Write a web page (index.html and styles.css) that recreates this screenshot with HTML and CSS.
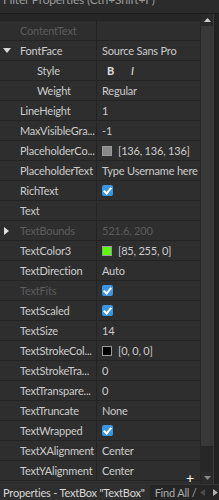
FILE: index.html
```html
<!DOCTYPE html>
<html lang="en">
<head>
    <meta charset="UTF-8">
    <title>Properties - TextBox</title>
    <link rel="stylesheet" href="styles.css">
</head>
<body>
    <div class="panel">
        <div class="filter"><span class="filter-text">Filter Properties (Ctrl+Shift+F)</span></div>
        <div class="body">
            <div class="rows">
                <div class="row"><div class="name disabled">ContentText</div><div class="value"></div></div>
                <div class="row"><div class="name"><span class="arrow down"></span>FontFace</div><div class="value">Source Sans Pro</div></div>
                <div class="row"><div class="name sub">Style</div><div class="value"><span class="bold">B</span><span class="italic">I</span></div></div>
                <div class="row"><div class="name sub">Weight</div><div class="value">Regular</div></div>
                <div class="row"><div class="name">LineHeight</div><div class="value">1</div></div>
                <div class="row"><div class="name">MaxVisibleGra...</div><div class="value">-1</div></div>
                <div class="row"><div class="name">PlaceholderCo...</div><div class="value"><span class="swatch" style="background:#888888"></span>[136, 136, 136]</div></div>
                <div class="row"><div class="name">PlaceholderText</div><div class="value">Type Username here</div></div>
                <div class="row"><div class="name">RichText</div><div class="value"><span class="check"></span></div></div>
                <div class="row"><div class="name">Text</div><div class="value"></div></div>
                <div class="row"><div class="name disabled"><span class="arrow right"></span>TextBounds</div><div class="value disabled">521.6, 200</div></div>
                <div class="row"><div class="name">TextColor3</div><div class="value"><span class="swatch" style="background:#55ff00"></span>[85, 255, 0]</div></div>
                <div class="row"><div class="name">TextDirection</div><div class="value">Auto</div></div>
                <div class="row"><div class="name disabled">TextFits</div><div class="value"><span class="check"></span></div></div>
                <div class="row"><div class="name">TextScaled</div><div class="value"><span class="check"></span></div></div>
                <div class="row"><div class="name">TextSize</div><div class="value">14</div></div>
                <div class="row"><div class="name">TextStrokeCol...</div><div class="value"><span class="swatch" style="background:#000000"></span>[0, 0, 0]</div></div>
                <div class="row"><div class="name">TextStrokeTra...</div><div class="value">0</div></div>
                <div class="row"><div class="name">TextTranspare...</div><div class="value">0</div></div>
                <div class="row"><div class="name">TextTruncate</div><div class="value">None</div></div>
                <div class="row"><div class="name">TextWrapped</div><div class="value"><span class="check"></span></div></div>
                <div class="row"><div class="name">TextXAlignment</div><div class="value">Center</div></div>
                <div class="row"><div class="name">TextYAlignment</div><div class="value">Center</div></div>
                <div class="rest"></div>
            </div>
            <div class="scrollbar">
                <div class="sb-btn"><svg width="7" height="4" viewBox="0 0 7 4"><path d="M0 4 L3.5 0 L7 4 Z" fill="#d0d0d0"/></svg></div>
                <div class="thumb"></div>
                <div class="track"></div>
                <div class="sb-btn"><svg width="7" height="4" viewBox="0 0 7 4"><path d="M0 0 L3.5 4 L7 0 Z" fill="#8a8a8a"/></svg></div>
            </div>
            <div class="edge"></div>
            <span class="plus">+</span>
        </div>
        <div class="tabs">
            <div class="tab active">Properties - TextBox "TextBox"</div>
            <div class="tab">Find All /</div>
            <div class="tab-arrows">
                <svg width="5" height="7" viewBox="0 0 5 7"><path d="M5 0 L0 3.5 L5 7 Z" fill="#4a4a4a"/></svg>
                <svg width="5" height="7" viewBox="0 0 5 7"><path d="M0 0 L5 3.5 L0 7 Z" fill="#b0b0b0"/></svg>
            </div>
        </div>
    </div>
</body>
</html>
```

FILE: styles.css
```css
body {
    margin: 0;
    background: #1f1f1f;
    font-family: "Lato", "Open Sans", sans-serif;
    font-size: 11px;
    letter-spacing: -0.2px;
    color: #cccccc;
}

.panel {
    width: 219px;
    height: 500px;
    display: flex;
    flex-direction: column;
    overflow: hidden;
}

.filter {
    height: 13px;
    background: #2b2b2b;
    border-bottom: 1px solid #1c1c1c;
    overflow: hidden;
    padding-left: 3px;
}

.filter-text {
    display: block;
    margin-top: -7px;
    line-height: 14px;
    font-size: 12px;
    color: #9a9a9a;
}

.body {
    display: flex;
    flex: 1;
    position: relative;
    background: #262626;
}

.rows {
    width: 200px;
    display: flex;
    flex-direction: column;
    padding-top: 6px;
}

.row {
    display: flex;
    height: 19px;
    border-top: 1px solid #232323;
    background: #2e2e2e;
}

.rest {
    flex: 1;
    background: #2e2e2e;
    border-top: 1px solid #232323;
}

.name {
    width: 97px;
    border-right: 1px solid #232323;
    padding-left: 20px;
    box-sizing: border-box;
    display: flex;
    align-items: center;
    position: relative;
    white-space: nowrap;
    overflow: hidden;
}

.name.sub {
    padding-left: 37px;
}

.value {
    flex: 1;
    padding-left: 5px;
    display: flex;
    align-items: center;
    white-space: nowrap;
    overflow: hidden;
}

.disabled {
    color: #5c5c5c;
}

.arrow {
    position: absolute;
    left: 3px;
    top: 7px;
    width: 0;
    height: 0;
}

.arrow.down {
    border-left: 4px solid transparent;
    border-right: 4px solid transparent;
    border-top: 5px solid #d8d8d8;
}

.arrow.right {
    left: 4px;
    top: 6px;
    border-top: 4px solid transparent;
    border-bottom: 4px solid transparent;
    border-left: 5px solid #e0e0e0;
}

.bold {
    font-weight: bold;
    margin-left: 5px;
    color: #e0e0e0;
}

.italic {
    font-style: italic;
    margin-left: 17px;
    color: #e0e0e0;
}

.swatch {
    width: 8px;
    height: 8px;
    border: 1px solid #9a9a9a;
    margin-right: 6px;
}

.check {
    width: 11px;
    height: 11px;
    border-radius: 2px;
    background: #3a96e0;
    position: relative;
}

.check::after {
    content: "";
    position: absolute;
    left: 3px;
    top: 1px;
    width: 3px;
    height: 6px;
    border-right: 2px solid #ffffff;
    border-bottom: 2px solid #ffffff;
    transform: rotate(40deg);
}

.scrollbar {
    width: 12px;
    display: flex;
    flex-direction: column;
    background: #2a2a2a;
    margin-left: 1px;
}

.sb-btn {
    height: 12px;
    display: flex;
    align-items: center;
    justify-content: center;
}

.thumb {
    height: 420px;
    background: #383838;
}

.track {
    flex: 1;
    background: #272727;
}

.edge {
    flex: 1;
    border-left: 1px solid #3a3a3a;
    background: #222222;
}

.plus {
    position: absolute;
    left: 186px;
    bottom: -2px;
    color: #ffffff;
    font-size: 14px;
}

.tabs {
    height: 15px;
    display: flex;
    align-items: center;
    background: #252525;
    border-top: 1px solid #333333;
    font-size: 11px;
}

.tab {
    padding: 0 3px;
    height: 100%;
    display: flex;
    align-items: center;
    white-space: nowrap;
}

.tab.active {
    background: #2e2e2e;
    color: #d8d8d8;
    padding-right: 5px;
}

.tab:not(.active) {
    color: #aaaaaa;
    padding-left: 5px;
}

.tab-arrows {
    margin-left: auto;
    display: flex;
    gap: 8px;
    padding-right: 4px;
}
```
